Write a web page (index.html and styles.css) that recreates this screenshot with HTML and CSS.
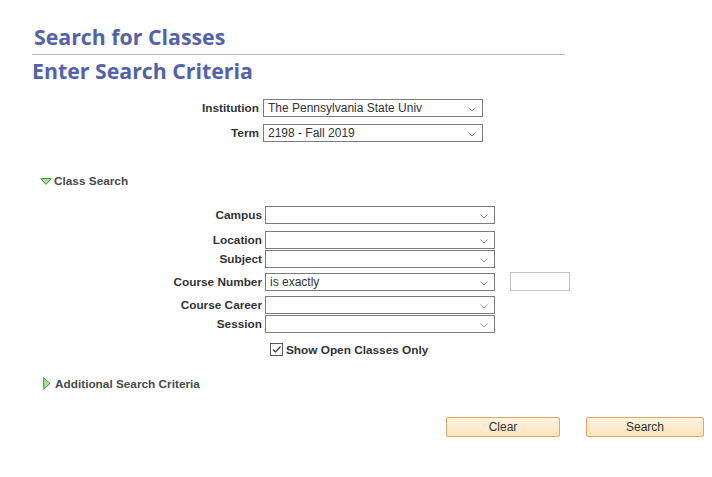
FILE: index.html
```html
<!DOCTYPE html>
<html>
<head>
<meta charset="utf-8">
<link rel="stylesheet" href="styles.css">
</head>
<body>
<div class="page">
  <h1 class="title">Search for Classes</h1>
  <div class="rule"></div>
  <h2 class="subtitle">Enter Search Criteria</h2>

  <div class="inst-block">
    <div class="row">
      <span class="label lab-inst">Institution</span>
      <div class="select sel-inst"><span class="val">The Pennsylvania State Univ</span><svg class="chev" width="8" height="5" viewBox="0 0 8 5"><path d="M0.5 0.5 L4 4 L7.5 0.5" fill="none" stroke="#8a8a8a" stroke-width="0.9"/></svg></div>
    </div>
    <div class="row gap7">
      <span class="label lab-inst">Term</span>
      <div class="select sel-inst"><span class="val">2198 - Fall 2019</span><svg class="chev" width="8" height="5" viewBox="0 0 8 5"><path d="M0.5 0.5 L4 4 L7.5 0.5" fill="none" stroke="#8a8a8a" stroke-width="0.9"/></svg></div>
    </div>
  </div>

  <div class="toggle toggle-open">
    <svg class="tri-down" width="12" height="7" viewBox="0 0 12 7"><path d="M0.8 0.6 L11.2 0.6 L6 6.4 Z" fill="#a8e09a" stroke="#3d9a2e" stroke-width="1" stroke-linejoin="round"/></svg>
    <span class="toggle-text">Class Search</span>
  </div>

  <div class="fields">
    <div class="row">
      <span class="label lab-f">Campus</span>
      <div class="select sel-f"><span class="val"></span><svg class="chev" width="8" height="5" viewBox="0 0 8 5"><path d="M0.5 0.5 L4 4 L7.5 0.5" fill="none" stroke="#8a8a8a" stroke-width="0.9"/></svg></div>
    </div>
    <div class="row gap7">
      <span class="label lab-f">Location</span>
      <div class="select sel-f"><span class="val"></span><svg class="chev" width="8" height="5" viewBox="0 0 8 5"><path d="M0.5 0.5 L4 4 L7.5 0.5" fill="none" stroke="#8a8a8a" stroke-width="0.9"/></svg></div>
    </div>
    <div class="row gap1">
      <span class="label lab-f">Subject</span>
      <div class="select sel-f"><span class="val"></span><svg class="chev" width="8" height="5" viewBox="0 0 8 5"><path d="M0.5 0.5 L4 4 L7.5 0.5" fill="none" stroke="#8a8a8a" stroke-width="0.9"/></svg></div>
    </div>
    <div class="row gap5">
      <span class="label lab-f">Course Number</span>
      <div class="select sel-f"><span class="val">is exactly</span><svg class="chev" width="8" height="5" viewBox="0 0 8 5"><path d="M0.5 0.5 L4 4 L7.5 0.5" fill="none" stroke="#8a8a8a" stroke-width="0.9"/></svg></div>
      <div class="textbox"></div>
    </div>
    <div class="row gap5">
      <span class="label lab-f">Course Career</span>
      <div class="select sel-f"><span class="val"></span><svg class="chev" width="8" height="5" viewBox="0 0 8 5"><path d="M0.5 0.5 L4 4 L7.5 0.5" fill="none" stroke="#8a8a8a" stroke-width="0.9"/></svg></div>
    </div>
    <div class="row gap1">
      <span class="label lab-f">Session</span>
      <div class="select sel-f"><span class="val"></span><svg class="chev" width="8" height="5" viewBox="0 0 8 5"><path d="M0.5 0.5 L4 4 L7.5 0.5" fill="none" stroke="#8a8a8a" stroke-width="0.9"/></svg></div>
    </div>
    <div class="check-row">
      <span class="checkbox"><svg width="11" height="11" viewBox="0 0 11 11"><path d="M2 5.5 L4.5 8 L9.5 2.5" fill="none" stroke="#333" stroke-width="1.2"/></svg></span>
      <span class="check-text">Show Open Classes Only</span>
    </div>
  </div>

  <div class="toggle toggle-closed">
    <svg class="tri-right" width="8" height="13" viewBox="0 0 8 13"><path d="M0.7 0.8 L7 6.5 L0.7 12.2 Z" fill="#a8e09a" stroke="#3d9a2e" stroke-width="1" stroke-linejoin="round"/></svg>
    <span class="toggle-text">Additional Search Criteria</span>
  </div>

  <div class="buttons">
    <div class="btn btn-clear">Clear</div>
    <div class="btn btn-search">Search</div>
  </div>
</div>
</body>
</html>
```
FILE: styles.css
```css
html, body {
  margin: 0;
  padding: 0;
  background: #ffffff;
}
body {
  font-family: "Liberation Sans", Arial, sans-serif;
  font-size: 12px;
  color: #333333;
}
.page {
  width: 712px;
  height: 477px;
  overflow: hidden;
}
.title, .subtitle {
  font-family: "Open Sans", sans-serif;
  font-weight: 700;
  font-size: 21.3px;
  line-height: 30px;
  color: #5262aa;
  margin: 0;
}
.title {
  margin: 22px 0 0 34px;
}
.rule {
  margin: 2px 0 0 32px;
  width: 533px;
  height: 1px;
  background: #b9b9b9;
}
.subtitle {
  margin: 1px 0 0 32px;
}
.inst-block {
  margin-top: 13px;
}
.row {
  display: flex;
  align-items: center;
  height: 18px;
}
.gap7 { margin-top: 7px; }
.gap5 { margin-top: 5px; }
.gap1 { margin-top: 1px; }
.label {
  font-weight: 700;
  text-align: right;
  color: #333333;
  white-space: nowrap;
  font-size: 11.8px;
}
.lab-inst {
  width: 259px;
  margin-right: 4px;
}
.lab-f {
  width: 262px;
  margin-right: 3px;
}
.select {
  box-sizing: border-box;
  height: 18px;
  border: 1px solid #7c7c7c;
  display: flex;
  align-items: center;
  padding: 0 6px 0 4px;
  background: #fff;
}
.sel-inst { width: 220px; }
.sel-f { width: 230px; }
.val {
  flex: 1;
  color: #333;
  line-height: 16px;
  white-space: nowrap;
  overflow: hidden;
}
.chev {
  display: block;
  margin-top: 3px;
}
.textbox {
  box-sizing: border-box;
  width: 60px;
  height: 19px;
  border: 1px solid #c2c2c2;
  margin-left: 15px;
  margin-top: -1px;
}
.toggle {
  display: flex;
  align-items: center;
  height: 14px;
}
.toggle-open {
  margin: 32px 0 0 40px;
}
.tri-down {
  display: block;
  margin-right: 2px;
}
.toggle-text {
  font-weight: 700;
  color: #4a4a4a;
  font-size: 11.8px;
}
.fields {
  margin-top: 18px;
}
.check-row {
  display: flex;
  align-items: center;
  margin: 10px 0 0 270px;
  height: 13px;
}
.checkbox {
  box-sizing: border-box;
  width: 13px;
  height: 13px;
  border: 1px solid #555;
  display: flex;
  align-items: center;
  justify-content: center;
  margin-right: 3px;
}
.checkbox svg { display: block; }
.check-text {
  font-weight: 700;
  color: #333;
  font-size: 11.8px;
}
.toggle-closed {
  margin: 21px 0 0 43px;
  height: 13px;
}
.tri-right {
  display: block;
  margin-right: 4px;
}
.buttons {
  display: flex;
  margin: 27px 0 0 446px;
  gap: 26px;
}
.btn {
  box-sizing: border-box;
  height: 20px;
  border: 1px solid #e0a868;
  border-radius: 2px;
  background: linear-gradient(#fdf3e1, #fbe4bd);
  text-align: center;
  line-height: 18px;
  color: #333;
  font-size: 12px;
}
.btn-clear { width: 114px; }
.btn-search { width: 118px; }
```
